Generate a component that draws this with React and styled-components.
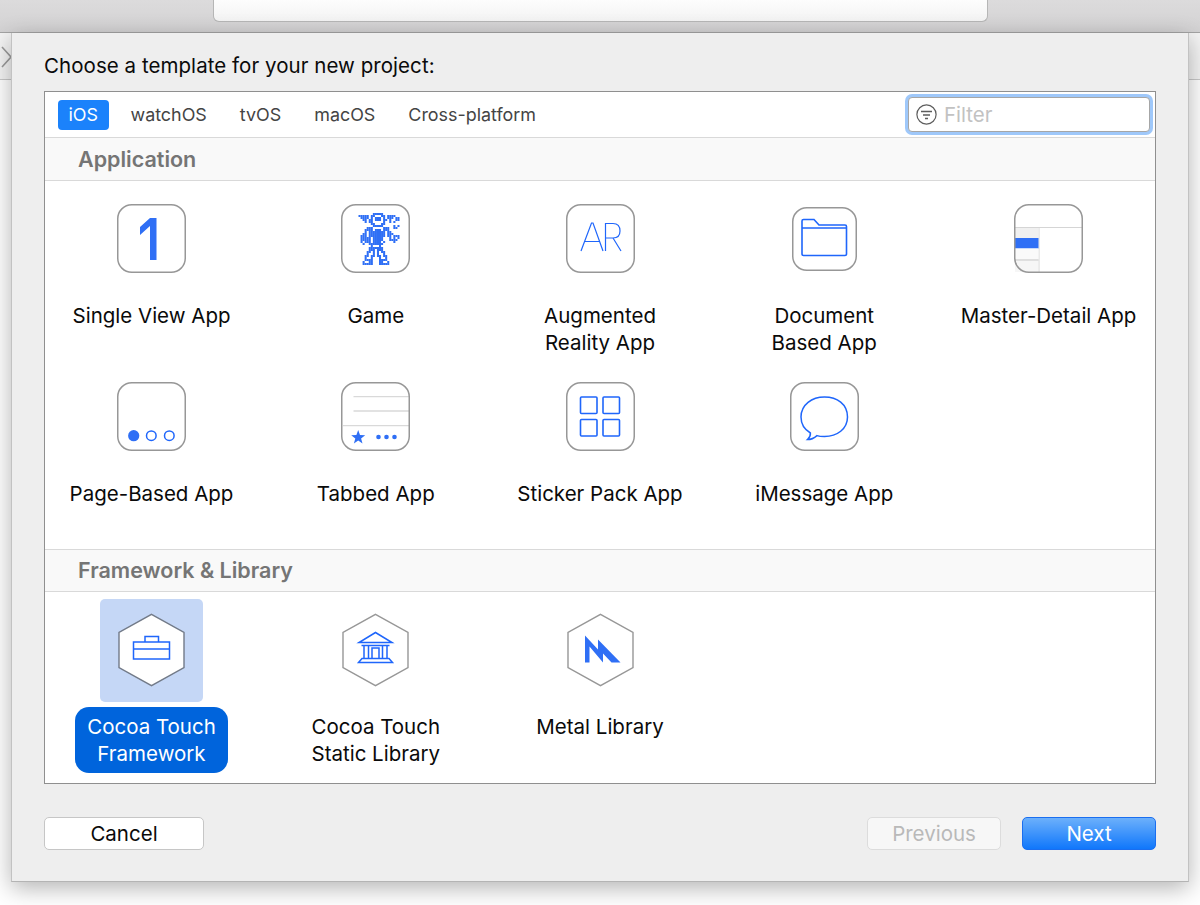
import React from 'react';
import styled, { createGlobalStyle } from 'styled-components';

const Global = createGlobalStyle`
  html, body { margin: 0; padding: 0; background: #fff; }
  body { font-family: Inter, "Liberation Sans", sans-serif; -webkit-font-smoothing: antialiased; }
`;

const Page = styled.div`
  width: 1200px;
  height: 905px;
  overflow: hidden;
  background: #fff;
`;
const TitleBar = styled.div`
  height: 33px;
  box-sizing: border-box;
  background: linear-gradient(#dcdbdc, #d3d2d3);
  border-bottom: 1px solid #a4a4a4;
  padding: 0 212.5px 0 213px;
`;
const AddressField = styled.div`
  height: 22px;
  box-sizing: border-box;
  background: linear-gradient(#fdfdfd, #f3f3f3);
  border: 1px solid #b6b6b6;
  border-top: 0;
  border-radius: 0 0 6px 6px;
`;
const Body = styled.div`
  display: grid;
  grid-template-columns: 11px 1178px 11px;
`;
const Sliver = styled.div`
  height: 47px;
  box-sizing: border-box;
  background: #f4f4f4;
  border-bottom: 1px solid #c9c9c9;
  overflow: hidden;
`;
const Sheet = styled.div`
  height: 849px;
  box-sizing: border-box;
  background: #eeeeee;
  border-left: 1px solid #c2c2c2;
  border-right: 1px solid #c2c2c2;
  border-bottom: 1px solid #b4b4b4;
  box-shadow: 0 6px 22px rgba(0, 0, 0, 0.3);
  padding: 18px 32px 0;
  position: relative;
`;
const Title = styled.div`
  font-size: 20.5px;
  line-height: 30px;
  color: #0a0a0a;
  letter-spacing: 0.05px;
  margin-bottom: 10px;
`;
const Panel = styled.div`
  height: 693px;
  box-sizing: border-box;
  background: #fff;
  border: 1px solid #8f8f8f;
`;
const TabBar = styled.div`
  height: 46px;
  box-sizing: border-box;
  border-bottom: 1px solid #d9d9d9;
  padding: 8px 5px 0 13px;
  display: flex;
  align-items: flex-start;
  gap: 13px;
`;
const Tab = styled.div`
  height: 30px;
  padding: 0 ${p => (p.$active ? 10.5 : 10)}px;
  margin-right: ${p => (p.$active ? -1 : 0)}px;
  border-radius: 4px;
  font-size: 17.9px;
  line-height: 29px;
  background: ${p => (p.$active ? '#1b82fb' : 'transparent')};
  color: ${p => (p.$active ? '#fff' : '#444')};
`;
const FilterBox = styled.div`
  margin-left: auto;
  width: 242px;
  height: 35px;
  margin-top: -3px;
  box-sizing: border-box;
  background: #fff;
  border: 1px solid #a6a6a6;
  border-radius: 4px;
  box-shadow: 0 0 0 3px #9fc8fa;
  display: flex;
  align-items: center;
  gap: 7px;
  padding-left: 7px;
  font-size: 20.5px;
  color: #c2c2c2;
`;
const SectionHeader = styled.div`
  height: 43px;
  box-sizing: border-box;
  background: #f9f9f9;
  border-bottom: 1px solid #d9d9d9;
  border-top: ${p => (p.$top ? '1px solid #d9d9d9' : '0')};
  padding-left: 33px;
  font-size: 21.5px;
  font-weight: 600;
  line-height: ${p => (p.$top ? 41 : 42)}px;
  color: #757575;
`;
const Grid = styled.div`
  display: grid;
  grid-template-columns: repeat(5, 224.25px);
  justify-content: center;
  padding-top: ${p => p.$top}px;
  padding-bottom: ${p => p.$bottom}px;
  grid-auto-rows: ${p => p.$row}px;
  row-gap: 26px;
`;
const Cell = styled.div`
  display: flex;
  flex-direction: column;
  align-items: center;
`;
const IconSlot = styled.div`
  flex: none;
  width: 103px;
  height: ${p => p.$height}px;
  display: flex;
  align-items: center;
  justify-content: center;
  border-radius: 5px;
  background: ${p => (p.$selected ? '#c5d7f6' : 'transparent')};
`;
const Label = styled.div`
  margin-top: ${p => p.$gap}px;
  padding: 6.5px 12.5px 6px;
  border-radius: 14px;
  text-align: center;
  white-space: pre-line;
  font-size: 20.5px;
  line-height: 27px;
  color: ${p => (p.$selected ? '#fff' : '#0a0a0a')};
  background: ${p => (p.$selected ? '#0064dc' : 'transparent')};
`;
const Footer = styled.div`
  margin-top: 33px;
  display: flex;
  align-items: flex-start;
`;
const Button = styled.div`
  width: ${p => p.$w}px;
  height: 33px;
  margin-right: ${p => p.$mr || 0}px;
  box-sizing: border-box;
  border-radius: 5px;
  text-align: center;
  font-size: 20.5px;
  line-height: 31px;
  border: 1px solid ${p => p.$border};
  background: ${p => p.$bg};
  color: ${p => p.$color};
`;
const Spacer = styled.div`
  flex: 1;
`;

const BLUE = '#2f6ff5';
const LINE = '#1f66fb';

const Square = ({ children }) => (
  <svg width="69" height="69" viewBox="0 0 69 69" style={{ display: 'block' }}>
    {children}
    <rect x="0.75" y="0.75" width="67.5" height="67.5" rx="14" fill="none" stroke="#979797" strokeWidth="1.5" />
  </svg>
);

const One = () => (
  <Square>
    <path d="M23 23 L33 14 H39.5 V56 H33 V22 L23 31 Z" fill={BLUE} />
  </Square>
);

const sprite = [
  '.......#####........',
  '#####.##...##.####..',
  '.####.#.###.#.###.##',
  '..##.##.###.##.#..##',
  '...#.##.....#..#.#..',
  '......##...##.......',
  '.......#####.....#.#',
  '....###.....###..##.',
  '...####.###.###.....',
  '...#.########.##....',
  '..##.########.###...',
  '.###.########.##.###',
  '.#####.#####...#.#.#',
  '.#####.#####...####.',
  '.#.###.####.#....#..',
  '..#..#######........',
  '......#...#.........',
  '.....#######........',
  '.....###.###........',
  '....##.#.#.##.......',
  '....#..#.#..#.......',
  '...##.##.##.##......',
  '...#..#...#..#......',
  '...####...####......',
  '..#..##...##..#.....',
  '..#####...#####.....',
];

const Game = () => (
  <Square>
    {sprite.map((row, y) =>
      row.split('').map((c, x) =>
        c === '#' ? <rect key={`${x}-${y}`} x={17.5 + x * 2.05} y={9 + y * 2} width="2.05" height="2" fill={BLUE} /> : null
      )
    )}
  </Square>
);

const AR = () => (
  <Square>
    <path d="M15 47 L25.5 19 H27 L37 47 M18.5 37.5 H33.5" fill="none" stroke={LINE} strokeWidth="1.2" />
    <path d="M39.5 47 V19.5 H47 Q54 19.5 54 27 Q54 34 47 34 H39.5 M47 34 L55 47" fill="none" stroke={LINE} strokeWidth="1.2" />
  </Square>
);

const Doc = () => (
  <svg width="65" height="64" viewBox="0 0 65 64" style={{ display: 'block' }}>
    <rect x="0.75" y="0.75" width="63.5" height="62.5" rx="14" fill="none" stroke="#979797" strokeWidth="1.5" />
    <path d="M10 21 V14 Q10 12.5 11.5 12.5 H22 L27 18 H53 Q54.5 18 54.5 19.5 V47 Q54.5 48.5 53 48.5 H11.5 Q10 48.5 10 47 Z M10 21 H54.5" fill="none" stroke={LINE} strokeWidth="1.6" />
  </svg>
);

const Master = () => (
  <Square>
    <path d="M1 23.5 H68 M25 23.5 V68" stroke="#d5d5d5" strokeWidth="1" fill="none" />
    <rect x="1" y="24" width="23.5" height="10" fill="#f0f0f0" />
    <rect x="1" y="34" width="23.5" height="10.5" fill={BLUE} />
    <rect x="1" y="44.5" width="23.5" height="11" fill="#fafafa" />
    <path d="M1 56 H24.5" stroke="#d5d5d5" strokeWidth="1.5" />
    <rect x="1" y="57" width="23.5" height="11" fill="#f2f2f2" opacity="0.7" />
  </Square>
);

const PageDots = () => (
  <Square>
    <circle cx="16.7" cy="53.7" r="5.6" fill={BLUE} />
    <circle cx="34.3" cy="53.7" r="4.8" fill="none" stroke={LINE} strokeWidth="1.5" />
    <circle cx="52.3" cy="53.7" r="4.8" fill="none" stroke={LINE} strokeWidth="1.5" />
  </Square>
);

const Tabbed = () => (
  <Square>
    <path d="M12.5 14.7 H68 M12.5 29 H68 M2 43.7 H68" stroke="#d9d9d9" strokeWidth="1.3" fill="none" />
    <path d="M17.2 48 L19 53 L24.2 53.2 L20.1 56.4 L21.5 61.5 L17.2 58.5 L12.9 61.5 L14.3 56.4 L10.2 53.2 L15.4 53 Z" fill={BLUE} />
    <circle cx="37.5" cy="55" r="2.3" fill={BLUE} />
    <circle cx="45.5" cy="55" r="2.3" fill={BLUE} />
    <circle cx="53.5" cy="55" r="2.3" fill={BLUE} />
  </Square>
);

const Sticker = () => (
  <Square>
    {[[14.5, 15], [37, 15], [14.5, 37.5], [37, 37.5]].map(([x, y]) => (
      <rect key={`${x}${y}`} x={x} y={y} width="16.5" height="16.5" rx="1" fill="none" stroke={LINE} strokeWidth="1.6" />
    ))}
  </Square>
);

const IMessage = () => (
  <Square>
    <path d="M34.5 15 C47 15 57.5 22 57.5 35 C57.5 47 47 54.5 34.5 54.5 C31.5 54.5 29 54.3 27 53.6 C24.5 55.8 21 57.6 17.5 57.6 C19.5 55.8 20.6 53.4 20.4 51 C14.5 47.5 11 41.5 11 35 C11 22.5 22 15 34.5 15 Z" fill="none" stroke={LINE} strokeWidth="1.5" />
  </Square>
);

const Hex = ({ children, dark }) => (
  <svg width="67" height="74" viewBox="0 0 67 74" style={{ display: 'block' }}>
    <path d="M33.5 1.3 L66 19.5 V54.5 L33.5 72.7 L1 54.5 V19.5 Z" fill="#fff" stroke={dark ? '#727a88' : '#979797'} strokeWidth="1.4" />
    {children}
  </svg>
);

const Briefcase = () => (
  <Hex dark>
    <path d="M15.5 29 H51.5 V46 H15.5 Z M15.5 36 H51.5 M27 29 V23.5 H40.5 V29" fill="none" stroke={LINE} strokeWidth="1.5" />
  </Hex>
);

const Bank = () => (
  <Hex>
    <path d="M33.5 19.5 L50 29.5 H17 Z M19.5 32.5 H47.5 M22 32.5 V45.5 M26.5 32.5 V45.5 M40.5 32.5 V45.5 M45 32.5 V45.5 M30 45.5 V35 H37 V45.5 M20 45.5 H47 L50.5 49.5 H16.5 Z" fill="none" stroke={LINE} strokeWidth="1.5" />
  </Hex>
);

const Metal = () => (
  <Hex>
    <path d="M18 22.5 L31 36.5 V26.5 L53.5 49.5 H44.5 L36 40.5 V49.5 L22.5 33.5 V49.5 H18 Z" fill={BLUE} />
  </Hex>
);

const FilterIcon = () => (
  <svg width="21" height="21" viewBox="0 0 21 21" style={{ flex: 'none' }}>
    <circle cx="10.5" cy="10.5" r="9.6" fill="none" stroke="#5d5d5d" strokeWidth="1.2" />
    <path d="M5 7.5 H16 M7 11 H14 M9 14.5 H12" stroke="#5d5d5d" strokeWidth="1.3" />
  </svg>
);

const app1 = [
  ['Single View App', One],
  ['Game', Game],
  ['Augmented\nReality App', AR],
  ['Document\nBased App', Doc],
  ['Master-Detail App', Master],
  ['Page-Based App', PageDots],
  ['Tabbed App', Tabbed],
  ['Sticker Pack App', Sticker],
  ['iMessage App', IMessage],
];
const libs = [
  ['Cocoa Touch\nFramework', Briefcase, true],
  ['Cocoa Touch\nStatic Library', Bank],
  ['Metal Library', Metal],
];

export default function App() {
  return (
    <Page>
      <Global />
      <TitleBar>
        <AddressField />
      </TitleBar>
      <Body>
        <Sliver>
          <svg width="11" height="47" viewBox="0 0 11 47" style={{ display: 'block' }}>
            <path d="M2 14 L11 24 L2 34" fill="none" stroke="#9b9b9b" strokeWidth="1.6" />
          </svg>
        </Sliver>
        <Sheet>
          <Title>Choose a template for your new project:</Title>
          <Panel>
            <TabBar>
              <Tab $active>iOS</Tab>
              <Tab>watchOS</Tab>
              <Tab>tvOS</Tab>
              <Tab>macOS</Tab>
              <Tab>Cross-platform</Tab>
              <FilterBox>
                <FilterIcon />
                Filter
              </FilterBox>
            </TabBar>
            <SectionHeader>Application</SectionHeader>
            <Grid $top={23} $bottom={15} $row={152}>
              {app1.map(([name, Icon]) => (
                <Cell key={name}>
                  <IconSlot $height={69}>
                    <Icon />
                  </IconSlot>
                  <Label $gap={22}>{name}</Label>
                </Cell>
              ))}
            </Grid>
            <SectionHeader $top>Framework &amp; Library</SectionHeader>
            <Grid $top={6.5} $bottom={0} $row={174}>
              {libs.map(([name, Icon, selected]) => (
                <Cell key={name}>
                  <IconSlot $height={103} $selected={selected}>
                    <Icon />
                  </IconSlot>
                  <Label $gap={5} $selected={selected}>{name}</Label>
                </Cell>
              ))}
            </Grid>
          </Panel>
          <Footer>
            <Button $w={160} $border="#c6c6c6" $bg="#fff" $color="#0a0a0a">Cancel</Button>
            <Spacer />
            <Button $w={134} $mr={21} $border="#dcdcdc" $bg="#f7f7f7" $color="#b9b9b9">Previous</Button>
            <Button $w={134} $border="#1a6ef0" $bg="linear-gradient(#6cb0fb, #1077fb)" $color="#fff">Next</Button>
          </Footer>
        </Sheet>
        <Sliver />
      </Body>
    </Page>
  );
}
